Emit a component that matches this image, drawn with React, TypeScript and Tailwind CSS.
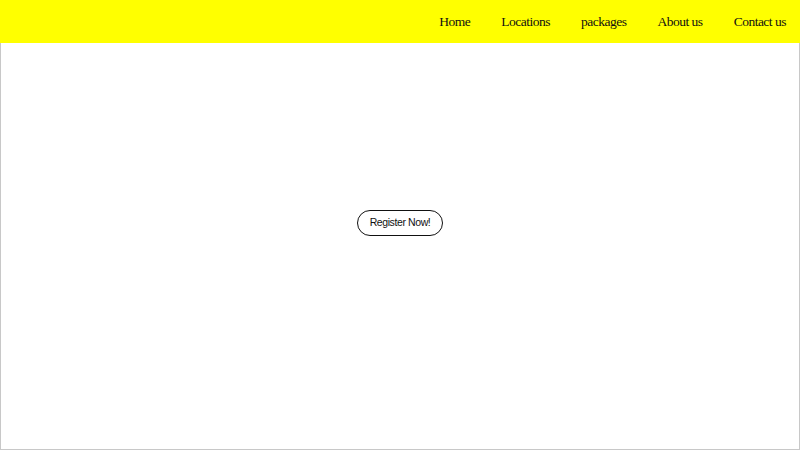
import React from 'react';

const navItems = ['Home', 'Locations', 'packages', 'About us', 'Contact us'];

const App: React.FC = () => {
  return (
    <div className="w-[800px] h-[450px] bg-white flex flex-col overflow-hidden">
      {/* Header */}
      <header className="h-[43px] bg-[#ffff00] flex items-center justify-end pr-[14px] pt-[2px] shrink-0">
        <nav className="flex items-center gap-[31px] font-['Liberation_Serif',serif] text-[13.5px] tracking-[-0.5px] text-[#111]">
          {navItems.map(item => (
            <a key={item} className="cursor-pointer">{item}</a>
          ))}
        </nav>
      </header>

      {/* Body */}
      <main className="flex-1 border border-t-0 border-[#c8c8c8] flex flex-col items-center pt-[167px]">
        <button className="h-[26px] w-[86px] rounded-full border-[1.5px] border-[#111] bg-white font-['Liberation_Sans',sans-serif] text-[10.5px] tracking-[-0.4px] text-[#111]">
          Register Now!
        </button>
      </main>
    </div>
  );
};

export default App;
